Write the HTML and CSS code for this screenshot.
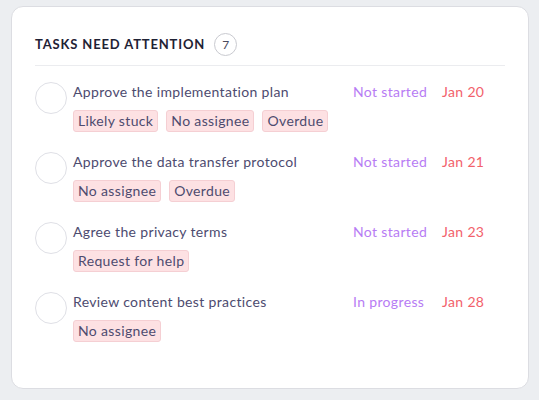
FILE: index.html
```html
<!DOCTYPE html>
<html>
<head>
<meta charset="utf-8">
<link rel="stylesheet" href="styles.css">
</head>
<body>
<div class="card">
  <div class="header">
    <h2 class="title">Tasks need attention</h2>
    <span class="count">7</span>
  </div>
  <ul class="tasks">
    <li class="task">
      <span class="check"></span>
      <div class="main">
        <div class="name">Approve the implementation plan</div>
        <div class="tags"><span class="tag">Likely stuck</span><span class="tag">No assignee</span><span class="tag">Overdue</span></div>
      </div>
      <span class="status">Not started</span>
      <span class="date">Jan 20</span>
    </li>
    <li class="task">
      <span class="check"></span>
      <div class="main">
        <div class="name">Approve the data transfer protocol</div>
        <div class="tags"><span class="tag">No assignee</span><span class="tag">Overdue</span></div>
      </div>
      <span class="status">Not started</span>
      <span class="date">Jan 21</span>
    </li>
    <li class="task">
      <span class="check"></span>
      <div class="main">
        <div class="name">Agree the privacy terms</div>
        <div class="tags"><span class="tag">Request for help</span></div>
      </div>
      <span class="status">Not started</span>
      <span class="date">Jan 23</span>
    </li>
    <li class="task">
      <span class="check"></span>
      <div class="main">
        <div class="name">Review content best practices</div>
        <div class="tags"><span class="tag">No assignee</span></div>
      </div>
      <span class="status">In progress</span>
      <span class="date">Jan 28</span>
    </li>
  </ul>
</div>
</body>
</html>
```

FILE: styles.css
```css
* { box-sizing: border-box; }
html, body { margin: 0; }
body {
  background: #eceef1;
  padding: 6px 10px 11px 11px;
  font-family: Lato, "Noto Sans", sans-serif;
}
.card {
  background: #fff;
  border: 1px solid #dcdde2;
  border-radius: 12px;
  height: 383px;
  padding: 26px 23px 0 23px;
}
.header {
  display: flex;
  align-items: center;
  gap: 9px;
  height: 22px;
}
.title {
  margin: 0;
  font-size: 13px;
  font-weight: 700;
  text-transform: uppercase;
  color: #1f2235;
  letter-spacing: 0.85px;
}
.count {
  width: 23px;
  height: 23px;
  border: 1px solid #c9cad0;
  border-radius: 50%;
  display: flex;
  align-items: center;
  justify-content: center;
  font-size: 12px;
  color: #4a4a5e;
}
.tasks {
  list-style: none;
  margin: 10px 0 0 0;
  padding: 16px 0 0 0;
  border-top: 1px solid #ebecef;
  display: flex;
  flex-direction: column;
  gap: 20px;
}
.task {
  display: grid;
  grid-template-columns: 32px 274px 83px 63px;
  column-gap: 6px;
  align-items: start;
  letter-spacing: 0.35px;
}
.check {
  width: 32px;
  height: 32px;
  border: 1px solid #dfe0e6;
  border-radius: 50%;
}
.name {
  font-size: 14px;
  line-height: 20px;
  color: #4d4b6f;
}
.tags {
  display: flex;
  gap: 8px;
  margin-top: 8px;
}
.tag {
  height: 22px;
  line-height: 20px;
  padding: 0 4px;
  background: #fde1e3;
  border: 1px solid #f5cfd3;
  border-radius: 3px;
  font-size: 14px;
  color: #4d4b6f;
}
.status {
  font-size: 14px;
  line-height: 20px;
  color: #b77cf4;
}
.date {
  font-size: 14px;
  line-height: 20px;
  color: #f2616b;
}
```
